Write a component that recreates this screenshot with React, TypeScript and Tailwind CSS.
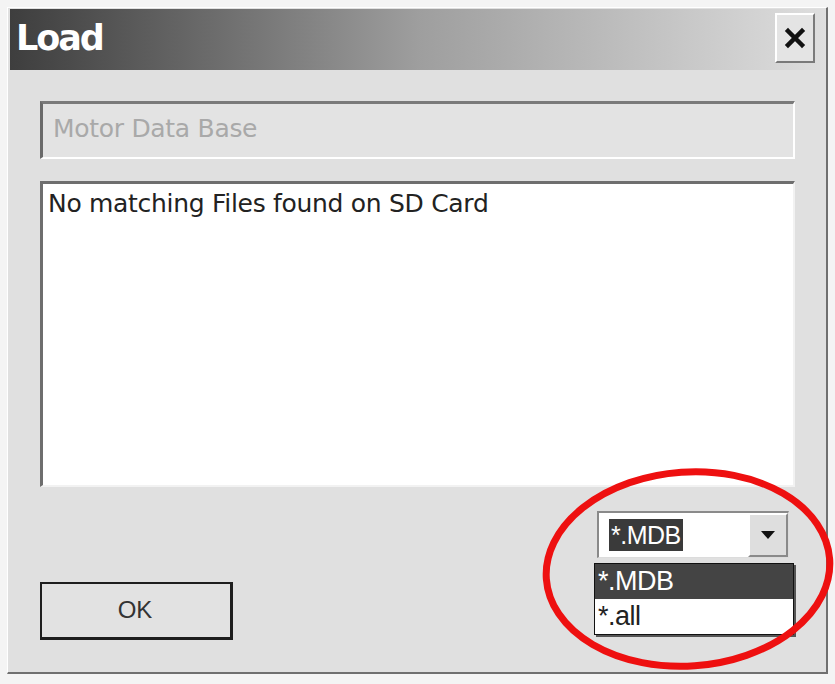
import { useState } from "react";

const FILTERS = ["*.MDB", "*.all"];

const CloseIcon = () => (
  <svg width="22" height="22" viewBox="0 0 22 22">
    <path d="M4 4 L18 18 M18 4 L4 18" stroke="#111" strokeWidth="4.5" strokeLinecap="square" />
  </svg>
);

const App = () => {
  const [filter, setFilter] = useState("*.MDB");

  return (
    <div className="relative w-[835px] h-[684px] overflow-hidden bg-[#f4f4f4] pt-[7px] pl-[7px] font-['DejaVu_Sans',sans-serif]">
      {/* dialog window */}
      <div className="w-[821px] h-[667px] bg-[#e0e0e0] border-t border-l border-white border-r-2 border-b-2 border-r-[#707070] border-b-[#707070] flex flex-col pt-px pl-[2px] pr-px">
        {/* title bar */}
        <div className="h-[61px] flex items-center justify-between bg-gradient-to-r from-[#3e3e3e] via-[#9e9e9e] to-[#dedede] pl-[6px] pr-[10px]">
          <span className="text-white font-bold text-[35px] tracking-[-0.06em] leading-none -mt-[3px]">
            Load
          </span>
          <button className="w-[40px] h-[50px] -mt-[4px] flex items-center justify-center bg-[#e4e4e4] border-t-2 border-l-2 border-white border-r-2 border-b-2 border-r-[#7a7a7a] border-b-[#7a7a7a]">
            <CloseIcon />
          </button>
        </div>

        {/* body */}
        <div className="flex flex-col pt-[31px] pl-[30px] pr-[30px]">
          <div className="h-[58px] bg-[#e3e3e3] border-t-[3px] border-l-[3px] border-t-[#7a7a7a] border-l-[#6a6a6a] border-b-2 border-r-2 border-b-white border-r-white flex items-center pl-[10px]">
            <span className="text-[25px] text-[#a9a9a9] tracking-[-0.3px] leading-none -mt-[4px]">
              Motor Data Base
            </span>
          </div>

          <div className="mt-[22px] h-[306px] bg-white border-t-[3px] border-l-[3px] border-t-[#6e6e6e] border-l-[#6e6e6e] border-b-2 border-r-2 border-b-[#f2f2f2] border-r-[#f2f2f2] pl-[5px] pt-[6px]">
            <p className="text-[25px] text-[#222] tracking-[-0.3px] leading-[28px]">
              No matching Files found on SD Card
            </p>
          </div>

          <div className="flex justify-between items-start mt-[24px]">
            <button className="mt-[71px] w-[193px] h-[58px] bg-[#e2e2e2] border-2 border-[#1e1e1e] border-b-[3px] border-r-[3px] flex items-center justify-center font-['Liberation_Sans',sans-serif] text-[24px] text-[#333]">
              <span className="-ml-[2px] -mt-[2px]">OK</span>
            </button>

            {/* filter combo */}
            <div className="relative mr-[6px] w-[192px] h-[47px] bg-white border-t-2 border-l-2 border-t-[#8a8a8a] border-l-[#8a8a8a] border-b border-r border-b-[#dcdcdc] border-r-[#dcdcdc] flex items-center font-['Liberation_Sans',sans-serif]">
              <span className="ml-[10px] bg-[#3a3a3a] text-white text-[25px] leading-[32px] px-[2px] tracking-[-0.5px]">
                {filter}
              </span>
              <div className="ml-auto w-[40px] h-full bg-[#dedede] border-t-2 border-l-2 border-white border-b-2 border-r-2 border-b-[#8a8a8a] border-r-[#8a8a8a] flex items-center justify-center">
                <svg width="14" height="8" viewBox="0 0 14 8">
                  <path d="M0 0 H14 L7 8 Z" fill="#111" />
                </svg>
              </div>

              <ul className="absolute left-[-5px] top-[50px] w-[200px] bg-white border border-[#111] shadow-[2px_2px_0_#555]">
                {FILTERS.map((f) => (
                  <li
                    key={f}
                    onClick={() => setFilter(f)}
                    className={`h-[35px] pl-[3px] text-[27px] leading-[35px] tracking-[-0.5px] ${
                      f === filter ? "bg-[#444] text-white" : "bg-white text-[#222]"
                    }`}
                  >
                    {f}
                  </li>
                ))}
              </ul>
            </div>
          </div>
        </div>
      </div>

      {/* red annotation circle */}
      <svg className="absolute left-0 top-0 pointer-events-none" width="835" height="684">
        <ellipse
          cx="688"
          cy="569"
          rx="142"
          ry="97"
          fill="none"
          stroke="#ee1010"
          strokeWidth="7"
          transform="rotate(-4 688 569)"
        />
      </svg>
    </div>
  );
};

export default App;
